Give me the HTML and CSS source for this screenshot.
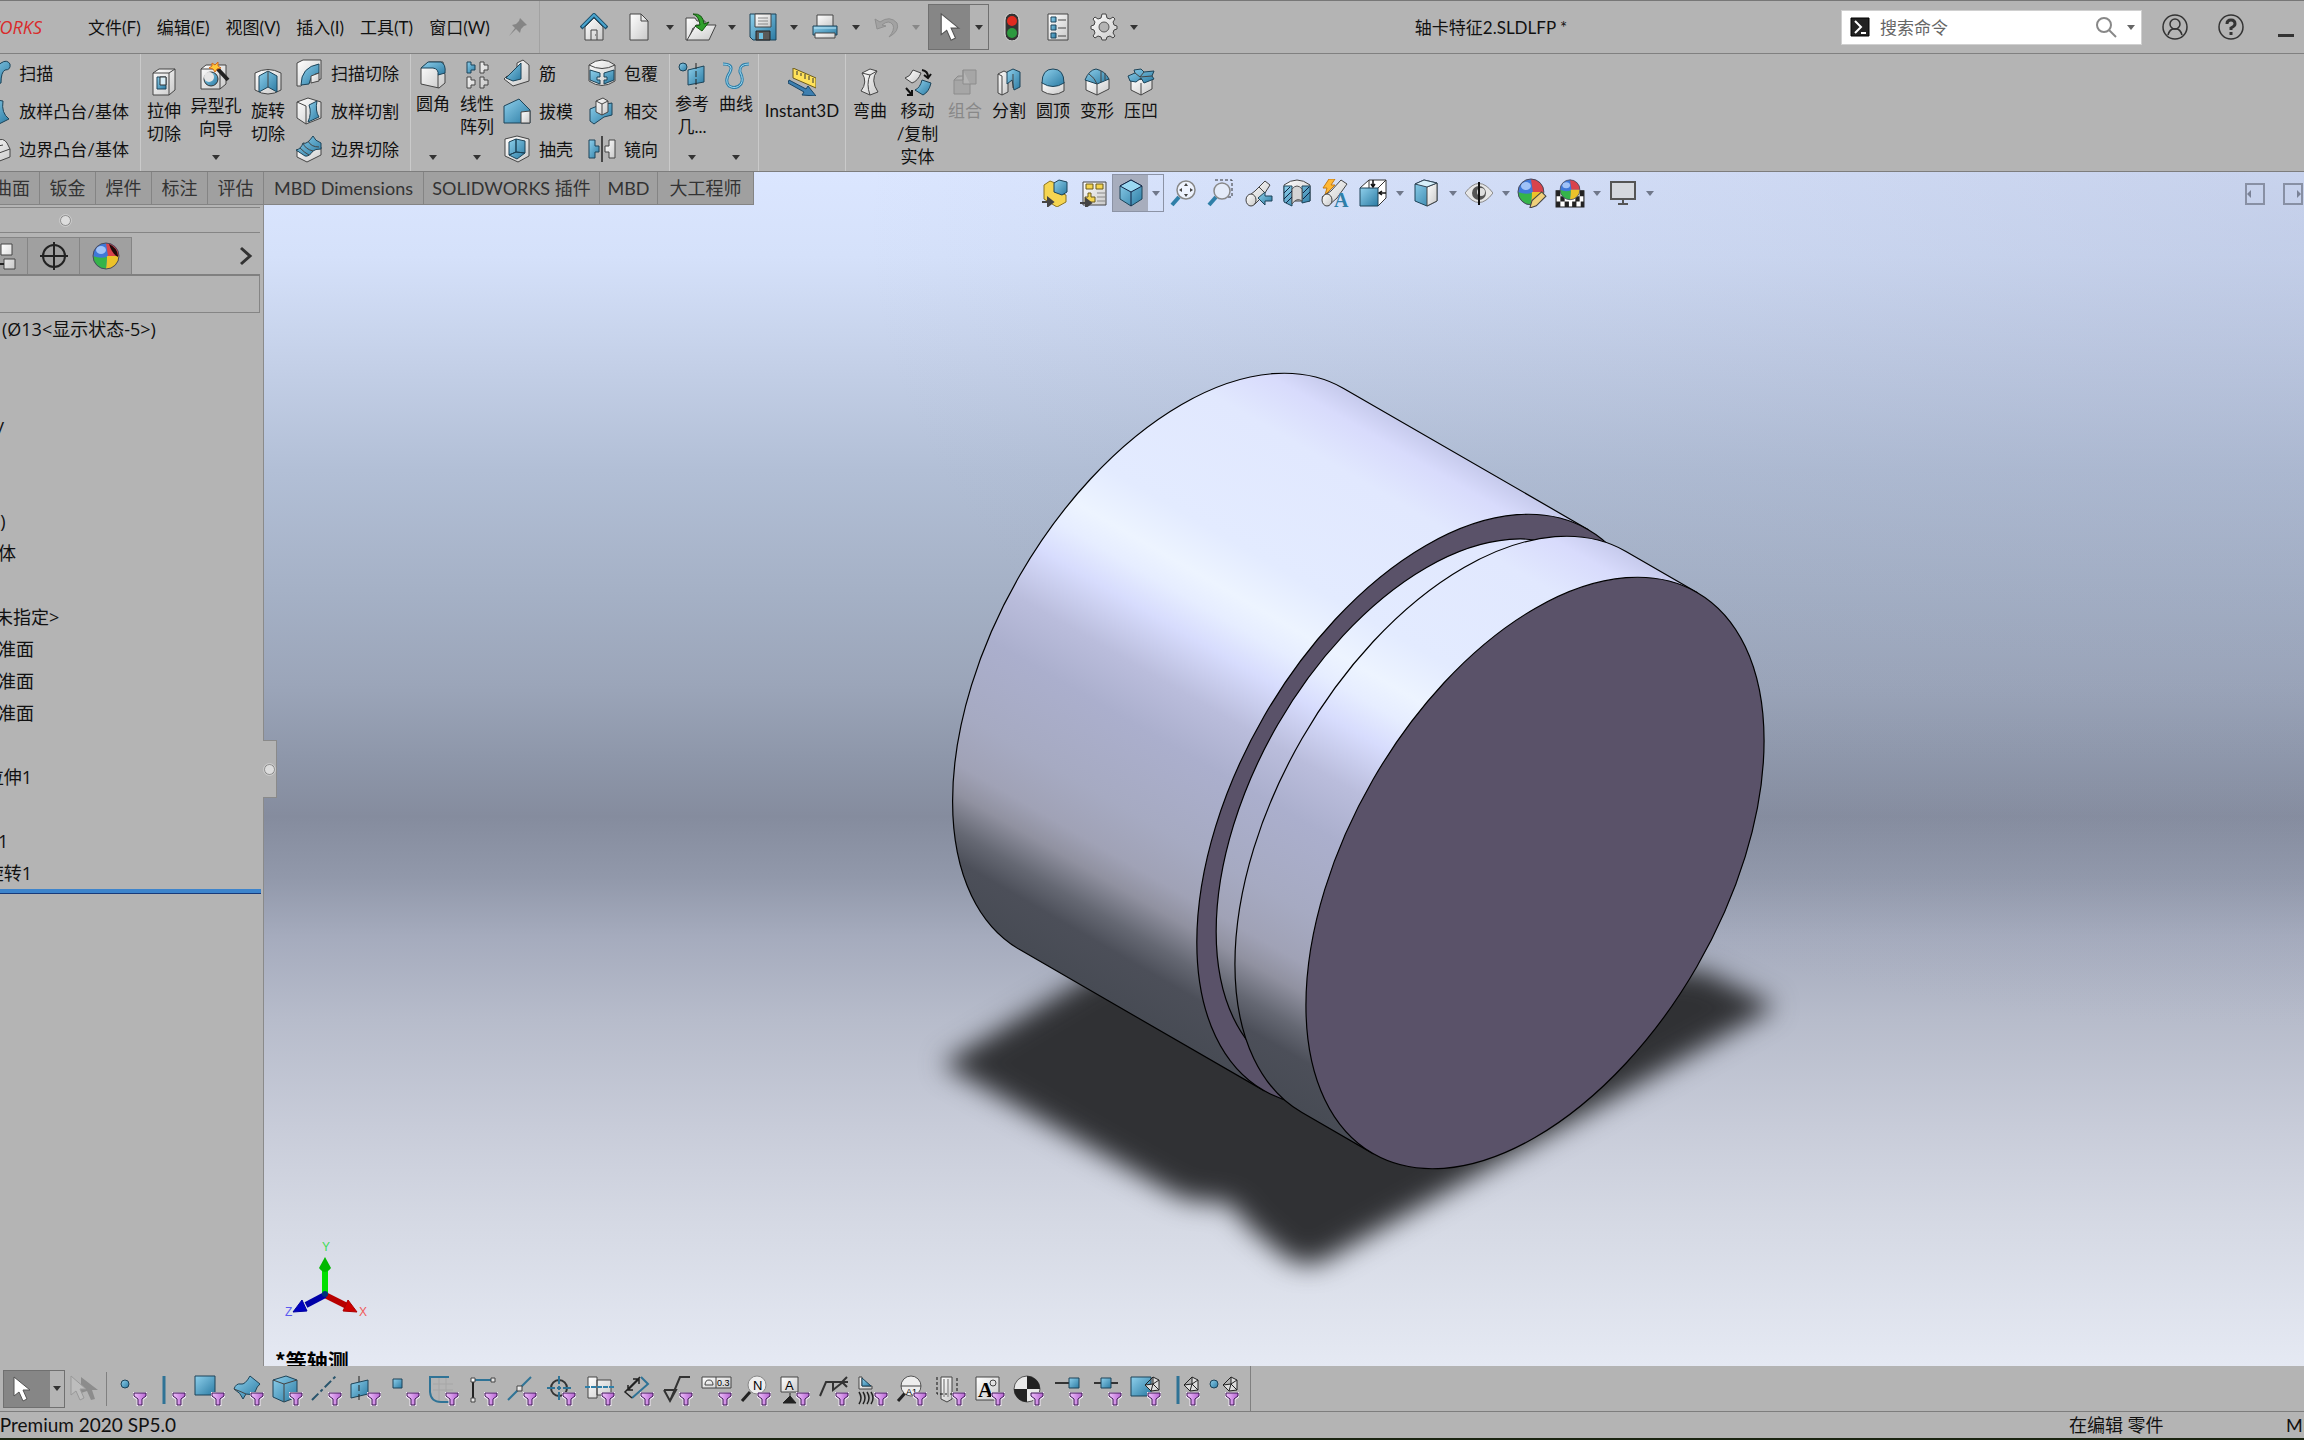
FILE: index.html
```html
<!DOCTYPE html>
<html lang="zh-CN">
<head>
    <meta charset="UTF-8">
    <meta name="viewport" content="width=device-width, initial-scale=1.0">
    <title>轴卡特征2.SLDLFP *</title>
    <link rel="stylesheet" href="styles.css">
</head>
<body>
    <!-- shared gradients and small reusable shapes -->
    <svg class="defs" aria-hidden="true">
        <defs>
            <linearGradient id="gBlue" x1="0" y1="0" x2="1" y2="1">
                <stop offset="0" stop-color="#8fd0ec"/><stop offset="1" stop-color="#2b7ba3"/>
            </linearGradient>
            <linearGradient id="gGrey" x1="0" y1="0" x2="1" y2="1">
                <stop offset="0" stop-color="#ffffff"/><stop offset="1" stop-color="#c9c9c9"/>
            </linearGradient>
            <linearGradient id="gPink" x1="0" y1="0" x2="1" y2="0">
                <stop offset="0" stop-color="#efc0fb"/><stop offset="1" stop-color="#b765d3"/>
            </linearGradient>
            <symbol id="funnel" viewBox="0 0 14 14">
                <path d="M1 1H13V4L9 7V13H5V7L1 4Z" fill="url(#gPink)" stroke="#f2e8f6" stroke-width="3"/>
                <path d="M1 1H13V4L9 7V13H5V7L1 4Z" fill="url(#gPink)" stroke="#3b1650"/>
            </symbol>
            <symbol id="arrow" viewBox="0 0 20 26">
                <path d="M2 1V20L7 16L11 25L15 23L11 14L18 14Z" fill="#fff" stroke="#555" stroke-width="1"/>
            </symbol>
            <symbol id="ball" viewBox="0 0 28 28">
                <circle cx="14" cy="14" r="13" fill="#3f78d8"/>
                <path d="M14 1A13 13 0 0 1 27 14H16Z" fill="#d9434b"/>
                <path d="M27 14A13 13 0 0 1 14 27L15 14Z" fill="#ecc22a"/>
                <path d="M14 27A13 13 0 0 1 1 14Q8 17 15 15Z" fill="#35b44a"/>
                <ellipse cx="9" cy="8" rx="5" ry="4" fill="#b9d4ff" opacity=".8"/>
                <circle cx="14" cy="14" r="13" fill="none" stroke="#4a4a5a"/>
            </symbol>
            <symbol id="mesh" viewBox="0 0 16 16">
                <path d="M1 9L9 1L15 4V14L7 15Z M1 9L9 8L9 1M9 8L15 4M9 8L15 14M9 8L7 15" fill="#ddd" stroke="#222"/>
            </symbol>
        </defs>
    </svg>

    <header class="titlebar">
        <div class="title-left">
            <div class="brand">SOLID<span>WORKS</span></div>
            <nav class="menu">
                <button type="button">文件(F)</button>
                <button type="button">编辑(E)</button>
                <button type="button">视图(V)</button>
                <button type="button">插入(I)</button>
                <button type="button">工具(T)</button>
                <button type="button">窗口(W)</button>
            </nav>
            <button type="button" class="pin" aria-label="固定">
                <svg width="20" height="20" viewBox="0 0 20 20"><path d="M12 1L19 8L16 9L13 12L12 16L8 12L1 19L7 11L4 8L8 7L11 4Z" fill="#858585"/></svg>
            </button>
        </div>
        <div class="quick">
            <button type="button" class="q-wide" aria-label="主页"><svg class="ico" viewBox="0 0 28 28"><path class="w" d="M5 14L14 5L23 14V27H5Z"/><path d="M1 15L14 2L27 15" fill="none" stroke="#1d4f6b" stroke-width="4"/><path d="M2 14L14 2L26 14" fill="none" stroke="#4aa5cf" stroke-width="2"/><path class="k" d="M11 27V17H17V27M15 22H16"/></svg></button>
            <button type="button" class="q-btn q-new" aria-label="新建"><svg class="ico" viewBox="0 0 28 28"><path class="w" d="M5 1H16L23 8V27H5Z"/><path class="k" d="M16 1V8H23"/></svg></button>
            <button type="button" class="drop" aria-label="新建选项"></button>
            <button type="button" class="q-btn" aria-label="打开"><svg class="ico-l" viewBox="0 0 32 28"><path class="w" d="M1 5H10L12 8H20V15H8L3 27H1Z"/><path class="w" d="M2 27L11 12H31L24 27Z"/><path d="M8 1Q18 0 19 11L24 9L17 18L10 13L15 12Q14 3 8 1Z" fill="#2fa02c" stroke="#13560f"/></svg></button>
            <button type="button" class="drop" aria-label="打开选项"></button>
            <button type="button" class="q-btn" aria-label="保存"><svg class="ico" viewBox="0 0 28 28"><path class="b" d="M1 1H27V27H4L1 24Z"/><path class="w" d="M6 1H22V14H6Z"/><path d="M9 5H19M9 8H19M9 11H19" stroke="#888"/><path d="M7 18H21V27H7Z" fill="#5a5a5a" stroke="#222"/><path d="M10 20H14V26H10Z" fill="#6fc0e0"/></svg></button>
            <button type="button" class="drop" aria-label="保存选项"></button>
            <button type="button" class="q-btn" aria-label="打印"><svg class="ico" viewBox="0 0 28 28"><path class="w" d="M6 2H22V14H6Z"/><path class="b" d="M2 13H26V22H2Z"/><path d="M3 15H25" stroke="#bfe6f6"/><path class="w" d="M4 20H24V25H4Z"/></svg></button>
            <button type="button" class="drop" aria-label="打印选项"></button>
            <button type="button" class="q-btn" aria-label="撤销" disabled><svg class="ico" viewBox="0 0 28 28"><path d="M2 6L4 16L13 13L9 12Q16 6 20 12Q22 17 16 24Q27 18 24 10Q17 2 7 9Z" fill="#a2a2a2" stroke="#8f8f8f"/></svg></button>
            <button type="button" class="drop dim q-last" aria-label="撤销选项" disabled></button>
            <span class="split">
                <button type="button" class="split-main" aria-label="选择"><svg width="22" height="30" viewBox="0 0 20 26"><use href="#arrow"/></svg></button>
                <button type="button" class="split-drop drop" aria-label="选择选项"></button>
            </span>
            <button type="button" class="q-wide" aria-label="重建模型"><svg class="ico" viewBox="0 0 28 28"><rect x="7" y="0" width="14" height="28" rx="7" fill="#333" stroke="#ddd"/><circle cx="14" cy="8" r="5" fill="#e02b20"/><circle cx="14" cy="20" r="5" fill="#2d9a3f"/></svg></button>
            <button type="button" class="q-wide" aria-label="文件属性"><svg class="ico" viewBox="0 0 28 28"><path class="w" d="M4 1H24V27H4Z"/><path class="b" d="M7 4H12V9H7ZM7 12H12V17H7ZM7 20H12V25H7Z"/><path class="k" d="M14 7H22M14 15H22M14 23H22"/></svg></button>
            <button type="button" class="q-wide" aria-label="选项"><svg class="ico" viewBox="0 0 28 28"><path class="w" d="M12 1H16L17 5L20 6L23 4L25 6L23 9L24 12L27 13V16L24 17L23 20L25 23L23 25L20 23L17 24L16 27H12L11 24L8 23L5 25L3 23L5 20L4 17L1 16V13L4 12L5 9L3 6L5 4L8 6L11 5Z"/><circle cx="14" cy="14" r="5" fill="#b4b4b4" stroke="#555"/></svg></button>
            <button type="button" class="drop q-tail" aria-label="选项菜单"></button>
        </div>
        <h1 class="doc-title">轴卡特征2.SLDLFP *</h1>
        <form class="search">
            <svg width="20" height="20" viewBox="0 0 20 20"><path d="M1 1H19V19H1Z" fill="#222" stroke="#000"/><path d="M5 4L11 10L5 16M11 16H16" fill="none" stroke="#fff" stroke-width="2"/></svg>
            <input type="text" id="cmd" placeholder="搜索命令" aria-label="搜索命令">
            <button type="submit" aria-label="搜索"><svg width="22" height="22" viewBox="0 0 22 22"><circle cx="9" cy="9" r="7" fill="none" stroke="#888" stroke-width="2"/><path d="M14 14L21 21" stroke="#888" stroke-width="2"/></svg></button>
            <button type="button" class="drop" aria-label="搜索范围"></button>
        </form>
        <div class="win-btns">
            <button type="button" aria-label="登录"><svg width="26" height="26" viewBox="0 0 26 26" fill="none" stroke="#333" stroke-width="1.5"><circle cx="13" cy="13" r="12"/><circle cx="13" cy="10" r="5"/><path d="M6 21Q8 14 13 15Q18 14 20 21"/></svg></button>
            <button type="button" aria-label="帮助"><svg width="26" height="26" viewBox="0 0 26 26" fill="none" stroke="#333"><circle cx="13" cy="13" r="12" stroke-width="1.5"/><path d="M9 10Q9 6 13 6Q17 6 17 10Q17 12 13 14V16M13 18V21" stroke-width="3"/></svg></button>
            <button type="button" class="min" aria-label="最小化"></button>
        </div>
    </header>

    <section class="ribbon" aria-label="特征">
        <div class="group g-first">
            <div class="stack">
                <button type="button" class="row"><svg class="ico" viewBox="0 0 28 28"><path class="b" d="M2 8Q10 12 18 4Q24 0 27 5Q28 11 22 11Q18 13 18 24L12 26Q12 16 8 15Z"/></svg>扫描</button>
                <button type="button" class="row"><svg class="ico" viewBox="0 0 28 28"><path class="b" d="M8 2L20 4Q18 16 26 22L16 27L4 24Z"/></svg>放样凸台/基体</button>
                <button type="button" class="row"><svg class="ico" viewBox="0 0 28 28"><path class="w" d="M2 14Q10 16 14 6Q20 2 24 8L27 14V22L14 27L2 22Z"/><path class="k" d="M6 14L16 18L27 14M16 18V26M10 12L20 10"/></svg>边界凸台/基体</button>
            </div>
        </div>
        <div class="group">
            <button type="button" class="tool t-46"><svg class="ico" viewBox="0 0 28 28"><path class="w" d="M3 5L9 1H25V22L19 27H3Z"/><path class="k" d="M3 5H19V27M19 5L25 1"/><path class="b" d="M7 9H16V21H7Z"/><path d="M10 9H16V17H10Z" fill="#d9eef7" stroke="#333"/></svg>拉伸<br>切除</button>
            <button type="button" class="tool t-58 has-drop"><svg class="ico-l" viewBox="0 0 32 28"><path class="w" d="M1 7L6 3H26V22L20 27H1Z"/><path class="k" d="M1 7H20V27"/><circle cx="11" cy="17" r="7" fill="url(#gBlue)" stroke="#333"/><circle cx="9" cy="15" r="5" fill="#e6e6e6"/><path d="M15 4L28 18" stroke="#222" stroke-width="4"/><path d="M12 1L15 3L18 0L18 4L21 6L17 7L15 10L13 7L9 6L12 4Z" fill="#ffc83a" stroke="#d2691e"/></svg>异型孔<br>向导<i class="caret"></i></button>
            <button type="button" class="tool t-46"><svg class="ico" viewBox="0 0 28 28"><path class="w" d="M1 5Q14 -2 27 5V22Q14 30 1 22Z"/><path class="b" d="M5 8L14 3L23 8V24L14 19L5 24Z"/><path class="k" d="M14 3V19"/></svg>旋转<br>切除</button>
            <div class="stack">
                <button type="button" class="row"><svg class="ico" viewBox="0 0 28 28"><path class="w" d="M2 4L8 1H26V20L20 22L14 14L6 27H2Z"/><path class="b" d="M6 26Q6 8 24 5V14Q16 15 14 25Z"/><path class="w" d="M16 17L24 14V22L16 24Z"/></svg>扫描切除</button>
                <button type="button" class="row"><svg class="ico" viewBox="0 0 28 28"><path class="w" d="M2 5L13 1L26 5V21L11 27L2 21Z"/><path class="k" d="M2 5L11 9V27"/><path class="b" d="M14 8L22 4Q20 14 24 20L13 25Q17 16 14 8Z"/></svg>放样切割</button>
                <button type="button" class="row"><svg class="ico" viewBox="0 0 28 28"><path class="w" d="M2 16V22L12 27L26 20V12Z"/><path class="b" d="M1 15Q6 14 8 8Q12 10 18 1Q20 6 26 8V14Q20 14 18 16Q14 22 10 21Z"/><path class="k" d="M8 8Q10 14 18 16M5 13Q10 18 14 20M13 6Q16 12 24 12"/></svg>边界切除</button>
            </div>
        </div>
        <div class="group">
            <button type="button" class="tool t-44 has-drop"><svg class="ico" viewBox="0 0 28 28"><path class="w" d="M2 7L10 1H24L26 14V22L20 27L2 23Z"/><path class="b" d="M2 7L9 1H22Q27 3 26 12L19 14Q20 8 14 7Z"/><path class="k" d="M19 14V27"/></svg>圆角<i class="caret"></i></button>
            <button type="button" class="tool t-44 has-drop"><svg class="ico" viewBox="0 0 28 28"><path class="b" d="M4 1H8V4H12V9H8V12H4Z"/><path class="w" d="M17 1H21V4H25V9H21V12H17ZM4 16H8V19H12V24H8V27H4ZM17 16H21V19H25V24H21V27H17Z"/></svg>线性<br>阵列<i class="caret"></i></button>
            <div class="stack">
                <button type="button" class="row"><svg class="ico" viewBox="0 0 28 28"><path class="w" d="M14 4L20 1L26 6V22L10 27L1 20L4 17L14 20Z"/><path class="b" d="M3 19L18 4V20L10 22Z"/></svg>筋</button>
                <button type="button" class="row"><svg class="ico" viewBox="0 0 28 28"><path class="b" d="M1 9L16 2L27 13V26H1Z"/><path class="w" d="M18 15L27 14V26H18Z"/></svg>拔模</button>
                <button type="button" class="row"><svg class="ico" viewBox="0 0 28 28"><path class="w" d="M2 4L14 1L26 4V21L15 27L2 21Z"/><path class="b" d="M6 7L13 4V17L6 20ZM13 4L22 6V18L13 17ZM6 20L13 17L22 18L14 24Z"/></svg>抽壳</button>
            </div>
            <div class="stack">
                <button type="button" class="row"><svg class="ico" viewBox="0 0 28 28"><path class="w" d="M1 6Q14 -4 27 6V22Q14 31 1 22Z"/><path class="k" d="M1 6Q14 13 27 6"/><path class="b" d="M2 11L12 14V18H9V21H12V25L2 21ZM26 11L16 14V18H19V21H16V25L26 21Z"/></svg>包覆</button>
                <button type="button" class="row"><svg class="ico" viewBox="0 0 28 28"><path class="b" d="M2 12L12 8L24 6V18L16 20L6 27L2 24Z"/><path class="w" d="M8 4L15 1L20 4V15L14 18L8 15Z"/><path class="k" d="M8 4L14 7L20 4M14 7V18"/></svg>相交</button>
                <button type="button" class="row"><svg class="ico" viewBox="0 0 28 28"><path class="b" d="M1 5H7V11H11V17H7V23H1Z"/><path class="w" d="M27 5H21V11H17V17H21V23H27Z"/><path d="M14 1V27" stroke="#222" stroke-width="1.5"/></svg>镜向</button>
            </div>
        </div>
        <div class="group">
            <button type="button" class="tool t-44 has-drop"><svg class="ico" viewBox="0 0 28 28"><circle class="b" cx="5" cy="6" r="4"/><path class="b" d="M10 9L26 5V21L10 24Z"/><path d="M18 2V28" stroke="#222" stroke-dasharray="6 2"/></svg>参考<br>几...<i class="caret"></i></button>
            <button type="button" class="tool t-44 has-drop"><svg class="ico" viewBox="0 0 28 28"><path d="M1 3Q12 3 8 11Q2 20 7 25Q14 29 19 23Q22 18 18 11Q17 3 27 3" fill="none" stroke="#2f7fa8" stroke-width="3"/><path d="M1 3Q12 3 8 11Q2 20 7 25Q14 29 19 23Q22 18 18 11Q17 3 27 3" fill="none" stroke="#9ed8f0"/></svg>曲线<i class="caret"></i></button>
        </div>
        <div class="group">
            <button type="button" class="tool t-86"><svg class="ico" viewBox="0 0 28 28"><path d="M5 0L28 10V20L5 10Z" fill="#ffe25a" stroke="#6b5a1c"/><path d="M9 3V7M13 5V8M17 6V11M21 8V12M25 10V15" stroke="#333"/><path d="M1 12L18 21L20 18L28 28L14 27L16 24L0 15Z" fill="#3d7fb0" stroke="#1b4666"/></svg>Instant3D</button>
        </div>
        <div class="group g-last">
            <button type="button" class="tool t-44"><svg class="ico" viewBox="0 0 28 28"><path class="w" d="M6 5L14 1L21 3Q14 12 22 24L14 27L5 23Q12 14 6 5Z"/><path class="k" d="M6 5L14 7L21 3M14 7Q10 16 14 27"/></svg>弯曲</button>
            <button type="button" class="tool t-51"><svg class="ico" viewBox="0 0 28 28"><path class="w" d="M1 10Q6 9 9 2L17 5Q14 13 8 15Z"/><path class="b" d="M11 22Q16 20 18 12L27 15Q25 24 19 27Z"/><path d="M18 2Q24 3 24 9M20 7L24 10L27 6M2 20L8 27M8 22V27H3" fill="none" stroke="#111" stroke-width="2"/></svg>移动<br>/复制<br>实体</button>
            <button type="button" class="tool t-44" disabled><svg class="ico" viewBox="0 0 28 28"><path class="dimmed" d="M12 2H25V16H19V26H3V12H12ZM3 12L7 8H12M12 2V16H19"/></svg>组合</button>
            <button type="button" class="tool t-44"><svg class="ico" viewBox="0 0 28 28"><path class="w" d="M3 6L9 3L13 5V24L7 27L3 25Z"/><path class="b" d="M12 4L18 1L25 4V19L19 22L17 12L12 16Z"/><path class="k" d="M3 6L7 8V27M18 6V20"/></svg>分割</button>
            <button type="button" class="tool t-44"><svg class="ico" viewBox="0 0 28 28"><path class="w" d="M3 14H25V23Q14 30 3 23Z"/><path class="b" d="M3 15Q3 1 14 1Q25 1 25 15Q14 22 3 15Z"/></svg>圆顶</button>
            <button type="button" class="tool t-44"><svg class="ico" viewBox="0 0 28 28"><path class="w" d="M3 12V22L14 27L26 21V11Z"/><path class="b" d="M2 12Q6 2 13 1Q22 3 26 11L14 16Z"/><path class="k" d="M14 16V27M14 16Q12 10 6 6M18 3V14M22 5V12"/></svg>变形</button>
            <button type="button" class="tool t-44"><svg class="ico" viewBox="0 0 28 28"><path class="w" d="M4 12V22L14 27L25 21V11Z"/><path class="b" d="M1 8L8 5L7 2L14 1L17 4L27 3L25 8L27 11L17 15L14 10L9 14L3 13Z"/><path class="k" d="M14 15V27M8 5L13 9L17 4M13 9L25 8"/></svg>压凹</button>
        </div>
    </section>

    <main class="work">
        <div class="viewport">
            <svg class="scene" viewBox="264 172 2040 1194" preserveAspectRatio="xMinYMin slice" role="img" aria-label="零件等轴测视图">
                <defs>
                    <linearGradient id="shade" gradientUnits="userSpaceOnUse" x1="0" y1="-324" x2="0" y2="324">
                        <stop offset="0" stop-color="#c6caec"/>
                        <stop offset=".04" stop-color="#d8dbfc"/>
                        <stop offset=".11" stop-color="#e1e8fe"/>
                        <stop offset=".29" stop-color="#e3ebff"/>
                        <stop offset=".36" stop-color="#edf4ff"/>
                        <stop offset=".4" stop-color="#e6edff"/>
                        <stop offset=".45" stop-color="#d7dcfd"/>
                        <stop offset=".53" stop-color="#babddc"/>
                        <stop offset=".61" stop-color="#abafcd"/>
                        <stop offset=".73" stop-color="#a6aac2"/>
                        <stop offset=".8" stop-color="#a0a2b6"/>
                        <stop offset=".84" stop-color="#9091a0"/>
                        <stop offset=".89" stop-color="#656873"/>
                        <stop offset=".93" stop-color="#4c4f59"/>
                        <stop offset="1" stop-color="#474b54"/>
                    </linearGradient>
                    <filter id="soft" x="-10%" y="-20%" width="120%" height="140%" color-interpolation-filters="sRGB"><feGaussianBlur stdDeviation="13"/></filter>
                </defs>
                <path d="M942 1064L1100 970H1702L1776 1006L1325 1260Q1305 1270 1284 1256L1246 1224Q1236 1203 1213 1201Q1195 1204 1172 1193Z" fill="#303134" filter="url(#soft)"/>
                <!-- local x runs along the cylinder axis, origin is the centre of the front face -->
                <g transform="translate(1535 873) rotate(30)" stroke="#000" stroke-width="1.2">
                    <path d="M-408 -324A187 324 0 0 0 -408 324H-126V-324Z" fill="url(#shade)"/>
                    <ellipse cx="-126" cy="0" rx="187" ry="324" fill="#5a5269"/>
                    <path d="M-126 -297A171 297 0 0 0 -126 297H-82V-297Z" fill="url(#shade)"/>
                    <path d="M-82 -324A187 324 0 0 0 -82 324H0V-324Z" fill="url(#shade)"/>
                    <ellipse cx="0" cy="0" rx="187" ry="324" fill="#5a5269"/>
                </g>
                <g>
                    <path d="M325 1295L347 1306" stroke="#b80000" stroke-width="6"/>
                    <path d="M348 1300L357 1312L343 1311Z" fill="#c00" stroke="#a00"/>
                    <path d="M325 1295L306 1305" stroke="#0000a8" stroke-width="6"/>
                    <path d="M302 1300L293 1312L307 1311Z" fill="#0000c0" stroke="#0000a0"/>
                    <path d="M325 1295V1270" stroke="#00e000" stroke-width="6"/>
                    <path d="M325 1257L331 1268Q325 1276 319 1268Z" fill="#00b800"/>
                    <circle cx="325" cy="1294" r="3" fill="#00307a"/>
                    <text class="axis" x="322" y="1251" fill="#3fdc55">Y</text>
                    <text class="axis" x="359" y="1316" fill="#f05a5a">X</text>
                    <text class="axis" x="285" y="1316" fill="#5a5af0">Z</text>
                </g>
                <text class="view-name" x="275" y="1369">*等轴测</text>
            </svg>
        </div>

        <div class="strip">
            <nav class="tabs">
                <button type="button" class="tab-cut">曲面</button>
                <button type="button" class="tab-56">钣金</button>
                <button type="button" class="tab-56">焊件</button>
                <button type="button" class="tab-56">标注</button>
                <button type="button" class="tab-56">评估</button>
                <button type="button" class="tab-160">MBD Dimensions</button>
                <button type="button" class="tab-176">SOLIDWORKS 插件</button>
                <button type="button" class="tab-58">MBD</button>
                <button type="button" class="tab-96">大工程师</button>
            </nav>
            <div class="heads-up">
                <button type="button" aria-label="零件"><svg class="ico" viewBox="0 0 28 28"><path d="M3 6L9 2L14 4V12L25 16V23L16 28L3 20Z" fill="#f5d551" stroke="#8a7220"/><path class="b" d="M13 4L18 1L26 3V13L21 16L13 13Z"/><path d="M1 23H10M7 19L12 23L7 27Z" fill="#444" stroke="#444" stroke-width="2"/></svg></button>
                <button type="button" aria-label="布局"><svg class="ico" viewBox="0 0 28 28"><path class="w" d="M4 3H27V26H4Z"/><path d="M7 5H14V10H7ZM17 5H24V10H17ZM9 14H12V18H16V23H6V18H9Z" fill="#f5d551" stroke="#6b5a1c"/><path d="M18 14H27M18 18H27M18 22H27" stroke="#888"/><path d="M1 24H8M7 20L12 24L7 28Z" fill="#444" stroke="#444" stroke-width="2"/></svg></button>
                <span class="split hud-split">
                    <button type="button" class="split-main" aria-label="视图定向"><svg class="ico" viewBox="0 0 28 28"><path class="b" d="M3 7L14 1L25 7V20L14 27L3 20Z"/><path d="M3 7L14 1L25 7L14 13Z" fill="#9bd8f2" stroke="#124"/><path d="M14 13V27" stroke="#124"/></svg></button>
                    <button type="button" class="split-drop drop" aria-label="视图定向选项"></button>
                </span>
                <button type="button" aria-label="整屏显示全图"><svg class="ico" viewBox="0 0 28 28"><path d="M10 18L3 26" stroke="#2f7fa8" stroke-width="4"/><circle cx="17" cy="11" r="9" fill="#eef3ff" stroke="#888" stroke-width="1.5"/><path d="M17 4L19 7H15ZM17 18L19 15H15ZM10 11L13 9V13ZM24 11L21 9V13Z" fill="#444"/></svg></button>
                <button type="button" aria-label="局部放大"><svg class="ico" viewBox="0 0 28 28"><path d="M8 1H25V18H20" fill="none" stroke="#333" stroke-dasharray="3 2"/><path d="M9 18L2 26" stroke="#2f7fa8" stroke-width="4"/><circle cx="15" cy="12" r="8" fill="#e4ebf8" stroke="#888" stroke-width="1.5"/></svg></button>
                <button type="button" aria-label="上一视图"><svg class="ico" viewBox="0 0 28 28"><path class="w" d="M1 19L10 12L20 2L25 6L18 17L9 26Z"/><ellipse class="w" cx="6" cy="21" rx="5" ry="6"/><path class="k" d="M14 8L20 14"/><path class="b" d="M13 19L20 13V17H27V22H20V26Z"/></svg></button>
                <button type="button" aria-label="剖面视图"><svg class="ico" viewBox="0 0 28 28"><path class="w" d="M1 6Q14 -4 27 6V22H1Z"/><path class="b" d="M1 7H9V27L1 23ZM19 7H27V22L19 24Z"/><path d="M9 10Q14 4 19 10V22Q14 18 9 25Z" fill="#d5d5d5" stroke="#555"/><path d="M1 14L7 8M1 20L9 12M3 24L9 18M20 14L26 8M20 20L27 13" stroke="#124"/></svg></button>
                <button type="button" aria-label="动态注解视图"><svg class="ico" viewBox="0 0 28 28"><path d="M8 0H14L10 6H14L4 16L6 9H2Z" fill="#ffb834" stroke="#c47a12"/><path class="w" d="M1 18L10 12L20 1L26 5L16 19L7 27Z"/><ellipse class="w" cx="6" cy="21" rx="5" ry="6"/><text class="hud-a" x="13" y="28">A</text></svg></button>
                <button type="button" aria-label="视图定向方位"><svg class="ico" viewBox="0 0 28 28"><path d="M1 9L10 1H27V19L19 27M27 1L19 9M10 1V9" fill="#fff" stroke="#333"/><path class="b" d="M1 9H19V27H1Z"/><path d="M14 1V7M12 5L14 8L16 5M27 14H21M23 12L20 14L23 16" fill="none" stroke="#111" stroke-width="1.5"/></svg></button>
                <button type="button" class="drop" aria-label="方位选项"></button>
                <button type="button" aria-label="显示样式"><svg class="ico" viewBox="0 0 28 28"><path class="b" d="M3 5L12 1L25 4V22L15 27L3 22Z"/><path class="w" d="M15 8L25 4V22L15 27Z"/><path d="M3 5L12 1L25 4L15 8Z" fill="#d7f0fa" stroke="#345"/></svg></button>
                <button type="button" class="drop" aria-label="样式选项"></button>
                <button type="button" aria-label="隐藏/显示项目"><svg class="ico" viewBox="0 0 28 28"><path d="M0 14Q14 -5 28 14Q14 33 0 14Z" fill="#e6e6e6" stroke="#888"/><circle cx="14" cy="14" r="7" fill="#555"/><circle cx="16" cy="13" r="4" fill="#ddd"/><path d="M14 3V26" stroke="#111" stroke-width="2"/></svg></button>
                <button type="button" class="drop" aria-label="项目选项"></button>
                <button type="button" aria-label="编辑外观"><svg class="ico-l" viewBox="0 0 28 28"><use href="#ball" width="26" height="26"/><path d="M12 28L14 21L23 13L27 17L18 26Z" fill="#efd07a" stroke="#444"/></svg></button>
                <button type="button" aria-label="应用布景"><svg class="ico-l" viewBox="0 0 28 28"><path d="M1 12H27V27H1Z" fill="#fff" stroke="#222"/><path d="M1 12H5V17H1ZM23 12H27V17H23ZM5 17H9V22H5ZM19 17H23V22H19ZM1 22H5V27H1ZM9 22H13V27H9ZM16 22H20V27H16ZM24 22H27V27H24Z" fill="#222"/><use href="#ball" x="4" y="0" width="20" height="22"/></svg></button>
                <button type="button" class="drop" aria-label="布景选项"></button>
                <button type="button" aria-label="视图设定"><svg class="ico" viewBox="0 0 28 28"><path d="M2 3H26V20H2Z" fill="#d5d8de" stroke="#555" stroke-width="2"/><path d="M14 20V25M9 25H19" stroke="#555" stroke-width="2"/></svg></button>
                <button type="button" class="drop" aria-label="视图设定选项"></button>
            </div>
            <div class="panes">
                <button type="button" aria-label="向左折叠"><svg width="20" height="22" viewBox="0 0 20 22"><path d="M1 1H19V21H1Z" fill="none" stroke="#8890a4" stroke-width="2"/><path d="M6 7V15L2 11Z" fill="#7a8296"/></svg></button>
                <button type="button" aria-label="向右折叠"><svg width="20" height="22" viewBox="0 0 20 22"><path d="M1 1H19V21H1Z" fill="none" stroke="#8890a4" stroke-width="2"/><path d="M14 7V15L18 11Z" fill="#7a8296"/></svg></button>
            </div>
        </div>

        <aside class="side">
            <div class="grip"><span class="dot"></span></div>
            <div class="side-tabs">
                <button type="button" class="st-cut" aria-label="配置"><svg width="16" height="28" viewBox="0 0 16 28"><path class="w" d="M1 2H12V13H1ZM4 17H15V27H4Z"/><path d="M0 22H4" stroke="#222" stroke-width="2"/></svg></button>
                <button type="button" aria-label="尺寸专家"><svg class="ico" viewBox="0 0 28 28"><circle cx="14" cy="14" r="11" fill="none" stroke="#222" stroke-width="2"/><path d="M14 0V28M0 14H28" stroke="#222" stroke-width="2"/></svg></button>
                <button type="button" aria-label="外观"><svg class="ico" viewBox="0 0 28 28"><use href="#ball"/><path d="M17 2Q26 6 26 15Q20 12 17 2Z" fill="#210a0a"/></svg></button>
                <button type="button" class="more" aria-label="更多"><svg width="14" height="20" viewBox="0 0 14 20"><path d="M2 2L11 10L2 18" fill="none" stroke="#333" stroke-width="3"/></svg></button>
            </div>
            <div class="filter-box"></div>
            <ul class="tree">
                <li class="root">(Ø13&lt;显示状态-5&gt;)</li>
                <li></li>
                <li></li>
                <li>History</li>
                <li></li>
                <li></li>
                <li>实体 (1)</li>
                <li>曲面实体</li>
                <li></li>
                <li>材质 &lt;未指定&gt;</li>
                <li>前视基准面</li>
                <li>上视基准面</li>
                <li>右视基准面</li>
                <li></li>
                <li>凸台-拉伸1</li>
                <li></li>
                <li>基准轴1</li>
                <li>切除-旋转1</li>
            </ul>
            <div class="rollback"></div>
            <button type="button" class="handle" aria-label="折叠面板"><span class="dot"></span></button>
        </aside>
    </main>

    <div class="filters">
        <span class="split f-split">
            <button type="button" class="split-main" aria-label="选择"><svg width="20" height="28" viewBox="0 0 20 26"><use href="#arrow"/></svg></button>
            <button type="button" class="split-drop drop" aria-label="选择选项"></button>
        </span>
        <button type="button" class="ghost" aria-label="清除过滤器" disabled><svg width="30" height="28" viewBox="0 0 30 28"><path d="M12 2V18L18 16L22 25L26 24L23 15L29 15Z" fill="#8c8c8c"/><path d="M2 1V20L7 16L11 25L15 23L11 14L17 14Z" fill="#bdbdbd" stroke="#999"/></svg></button>
        <div class="filter-list">
            <button type="button" aria-label="过滤顶点"><svg viewBox="0 0 36 34"><circle class="b" cx="12" cy="12" r="4"/><use href="#funnel" x="20" y="20" width="14" height="14"/></svg></button>
            <button type="button" aria-label="过滤边线"><svg viewBox="0 0 36 34"><path class="bl" d="M12 4V32"/><use href="#funnel" x="20" y="20" width="14" height="14"/></svg></button>
            <button type="button" aria-label="过滤面"><svg viewBox="0 0 36 34"><path class="b" d="M4 4H24V23H4Z"/><use href="#funnel" x="20" y="20" width="14" height="14"/></svg></button>
            <button type="button" aria-label="过滤曲面实体"><svg viewBox="0 0 36 34"><path class="b" d="M4 17Q6 11 11 12Q15 13 20 4L30 12Q27 14 25 20Q21 24 16 22L13 27Q11 21 4 17Z"/><path class="k" d="M4 17Q12 20 16 22"/><use href="#funnel" x="20" y="20" width="14" height="14"/></svg></button>
            <button type="button" aria-label="过滤实体"><svg viewBox="0 0 36 34"><path class="b" d="M4 8L17 4L28 8V25L15 30L4 25Z"/><path class="k" d="M4 8L15 12L28 8M15 12V30"/><use href="#funnel" x="20" y="20" width="14" height="14"/></svg></button>
            <button type="button" aria-label="过滤基准轴"><svg viewBox="0 0 36 34"><path d="M4 28L28 4" stroke="#28546c" stroke-width="2" stroke-dasharray="9 3 3 3"/><use href="#funnel" x="20" y="20" width="14" height="14"/></svg></button>
            <button type="button" aria-label="过滤基准面"><svg viewBox="0 0 36 34"><path class="b" d="M4 12L21 8V22L4 26Z"/><path d="M12 4V31" stroke="#222" stroke-dasharray="6 3"/><use href="#funnel" x="20" y="20" width="14" height="14"/></svg></button>
            <button type="button" aria-label="过滤草图点"><svg viewBox="0 0 36 34"><path class="b" d="M7 7H16V16H7Z"/><use href="#funnel" x="20" y="20" width="14" height="14"/></svg></button>
            <button type="button" aria-label="过滤草图"><svg viewBox="0 0 36 34"><path d="M8 12H28M8 18H28M14 6V28M21 6V28" stroke="#a6a6a6"/><path class="bl thin" d="M24 5H5V20Q6 30 16 30H28"/><use href="#funnel" x="20" y="20" width="14" height="14"/></svg></button>
            <button type="button" aria-label="过滤草图线段"><svg viewBox="0 0 36 34"><path class="bl thin" d="M9 8H28"/><path d="M9 8V28" stroke="#222" stroke-width="2"/><path class="w" d="M7 6H11V10H7ZM27 6H31V10H27ZM7 26H11V30H7Z"/><use href="#funnel" x="20" y="20" width="14" height="14"/></svg></button>
            <button type="button" aria-label="过滤中点"><svg viewBox="0 0 36 34"><path class="bl thin" d="M5 28L28 5"/><path class="w" d="M14 14H19V19H14Z"/><use href="#funnel" x="20" y="20" width="14" height="14"/></svg></button>
            <button type="button" aria-label="过滤中心符号线"><svg viewBox="0 0 36 34"><circle cx="17" cy="16" r="8" fill="none" stroke="#333" stroke-width="2"/><path class="bl thin" d="M17 4V12M17 20V28M5 16H13M21 16H29M15 16H19M17 14V18"/><use href="#funnel" x="20" y="20" width="14" height="14"/></svg></button>
            <button type="button" aria-label="过滤中心线"><svg viewBox="0 0 36 34"><path class="w" d="M7 5H16V26H7ZM16 8H30V23H16Z"/><path d="M4 15H33" stroke="#2f7fa8" stroke-width="2" stroke-dasharray="5 1"/><use href="#funnel" x="20" y="20" width="14" height="14"/></svg></button>
            <button type="button" aria-label="过滤尺寸"><svg viewBox="0 0 36 34"><path class="bl thin" d="M12 26L28 12L21 5"/><path d="M20 5L5 20L12 26M9 17L18 8M8 13V18H13M13 7H19V12" fill="none" stroke="#222" stroke-width="1.5"/><use href="#funnel" x="20" y="20" width="14" height="14"/></svg></button>
            <button type="button" aria-label="过滤表面粗糙度"><svg viewBox="0 0 36 34"><path d="M5 18H17L11 29L5 18M11 29L21 5H31" fill="none" stroke="#333" stroke-width="2"/><use href="#funnel" x="20" y="20" width="14" height="14"/></svg></button>
            <button type="button" aria-label="过滤形位公差"><svg viewBox="0 0 36 34"><path class="w" d="M4 5H33V16H4ZM18 5V16"/><path class="k" d="M7 13Q7 8 11 8Q15 8 15 13Z"/><text class="tiny" x="19" y="14">0.3</text><use href="#funnel" x="20" y="20" width="14" height="14"/></svg></button>
            <button type="button" aria-label="过滤零件序号"><svg viewBox="0 0 36 34"><path d="M5 29L13 20" stroke="#222" stroke-width="3"/><circle cx="20" cy="13" r="9" fill="#eee" stroke="#888"/><text class="letter" x="16" y="18">N</text><use href="#funnel" x="20" y="20" width="14" height="14"/></svg></button>
            <button type="button" aria-label="过滤基准特征"><svg viewBox="0 0 36 34"><path class="w" d="M5 5H22V20H5Z"/><text class="letter" x="9" y="18">A</text><path d="M14 21V26M7 31L14 24L20 31Z" fill="#222" stroke="#222"/><use href="#funnel" x="20" y="20" width="14" height="14"/></svg></button>
            <button type="button" aria-label="过滤焊接符号"><svg viewBox="0 0 36 34"><path d="M5 24L11 10H33M18 10V18L28 10M32 5L27 10L32 15" fill="none" stroke="#333" stroke-width="2"/><use href="#funnel" x="20" y="20" width="14" height="14"/></svg></button>
            <button type="button" aria-label="过滤焊缝"><svg viewBox="0 0 36 34"><path class="w" d="M5 5H8V14H18V17H5Z"/><path class="b" d="M8 6L17 14H8Z"/><path d="M5 20Q9 26 5 32M9 20Q13 26 9 32M13 20Q17 26 13 32M17 20Q21 26 17 32" fill="none" stroke="#222" stroke-width="1.5"/><use href="#funnel" x="20" y="20" width="14" height="14"/></svg></button>
            <button type="button" aria-label="过滤基准目标"><svg viewBox="0 0 36 34"><path d="M5 29L13 20" stroke="#222" stroke-width="3"/><circle cx="18" cy="14" r="10" fill="#eee" stroke="#555"/><path class="k" d="M8 14H28"/><text class="tiny" x="13" y="23">A1</text><use href="#funnel" x="20" y="20" width="14" height="14"/></svg></button>
            <button type="button" aria-label="过滤装饰螺纹线"><svg viewBox="0 0 36 34"><path class="w" d="M9 5H20V27L15 30L9 27Z"/><path d="M5 5V22H25V5" fill="none" stroke="#111" stroke-dasharray="3 2"/><path d="M12 7V25M16 7V25" stroke="#aaa" stroke-width="2"/><use href="#funnel" x="20" y="20" width="14" height="14"/></svg></button>
            <button type="button" aria-label="过滤块"><svg viewBox="0 0 36 34"><path class="w" d="M5 5H28V28H5Z"/><text class="serif-a" x="7" y="25">A</text><circle class="k" cx="22" cy="11" r="3"/><use href="#funnel" x="20" y="20" width="14" height="14"/></svg></button>
            <button type="button" aria-label="过滤质心"><svg viewBox="0 0 36 34"><circle cx="17" cy="17" r="13" fill="#e8e8e8" stroke="#555"/><path d="M17 4A13 13 0 0 1 30 17H17ZM17 30A13 13 0 0 1 4 17H17Z" fill="#222"/><use href="#funnel" x="20" y="20" width="14" height="14"/></svg></button>
            <button type="button" aria-label="过滤连接点"><svg viewBox="0 0 36 34"><path d="M6 11H21" stroke="#333" stroke-width="2"/><path class="b" d="M20 6H30V16H20Z"/><use href="#funnel" x="20" y="20" width="14" height="14"/></svg></button>
            <button type="button" aria-label="过滤线路点"><svg viewBox="0 0 36 34"><path d="M6 11H30" stroke="#333" stroke-width="2"/><path class="b" d="M13 6H23V16H13Z"/><use href="#funnel" x="20" y="20" width="14" height="14"/></svg></button>
            <button type="button" aria-label="过滤网格面"><svg viewBox="0 0 36 34"><path class="b" d="M4 5H24V24H4Z"/><use href="#mesh" x="17" y="4" width="16" height="16"/><use href="#funnel" x="20" y="20" width="14" height="14"/></svg></button>
            <button type="button" aria-label="过滤网格边线"><svg viewBox="0 0 36 34"><path class="bl" d="M12 4V32"/><use href="#mesh" x="17" y="4" width="16" height="16"/><use href="#funnel" x="20" y="20" width="14" height="14"/></svg></button>
            <button type="button" aria-label="过滤网格顶点"><svg viewBox="0 0 36 34"><circle class="b" cx="9" cy="12" r="4"/><use href="#mesh" x="17" y="4" width="16" height="16"/><use href="#funnel" x="20" y="20" width="14" height="14"/></svg></button>
        </div>
    </div>

    <footer class="status">
        <span class="version">SOLIDWORKS Premium 2020 SP5.0</span>
        <span class="mode">在编辑 零件</span>
        <span class="units">MMGS</span>
    </footer>
</body>
</html>
```
FILE: styles.css
```css
* {
    box-sizing: border-box;
}
body {
    margin: 0;
    height: 100vh;
    display: flex;
    flex-direction: column;
    overflow: hidden;
    background: #b4b4b4;
    color: #111;
    font-family: Lato, "Noto Sans CJK SC", sans-serif;
    font-size: 17px;
    line-height: 23px;
    border-bottom: 2px solid #1a2410;
}
button {
    font: inherit;
    color: inherit;
    background: none;
    border: 0;
    padding: 0;
    margin: 0;
    display: flex;
    align-items: center;
    justify-content: center;
    flex: none;
    white-space: nowrap;
}
svg {
    display: block;
    flex: none;
}
.defs {
    position: absolute;
    width: 0;
    height: 0;
}
.ico {
    width: 28px;
    height: 28px;
}
.ico-l {
    width: 32px;
    height: 30px;
}

/* icon paint */
.b {
    fill: url(#gBlue);
    stroke: #1c4358;
}
.w {
    fill: url(#gGrey);
    stroke: #444;
}
.k {
    fill: none;
    stroke: #444;
}
.bl {
    fill: none;
    stroke: #2f7396;
    stroke-width: 3;
}
.thin {
    stroke-width: 2;
}
.dimmed {
    fill: #a6a6a6;
    stroke: #8c8c8c;
}

/* small black triangle */
.drop::after, .caret {
    content: "";
    width: 0;
    height: 0;
    border: 4px solid transparent;
    border-top: 5px solid #333;
    border-bottom: 0;
}
.dim::after {
    border-top-color: #888;
}

/* title bar */
.titlebar {
    height: 54px;
    flex: none;
    display: flex;
    align-items: center;
    border-top: 1px solid #777;
    border-bottom: 1px solid #808080;
}
.title-left {
    flex: none;
    width: 540px;
    height: 100%;
    display: flex;
    align-items: center;
    border-right: 1px solid #a2a2a2;
}
.brand {
    width: 42px;
    display: flex;
    justify-content: flex-end;
    overflow: hidden;
    color: #d92b2b;
    font: italic 18px "Open Sans", sans-serif;
}
.menu {
    display: flex;
    gap: 16px;
    margin-left: 46px;
}
.pin {
    margin-left: 18px;
}
.quick {
    display: flex;
    align-items: center;
    height: 100%;
    margin-left: 31px;
}
.q-wide {
    width: 46px;
}
.q-btn {
    width: 32px;
}
.q-new {
    margin-left: 6px;
}
.quick > .drop {
    width: 30px;
    height: 30px;
}
.quick > .q-last {
    width: 25px;
}
.quick > .q-tail {
    width: 14px;
}
.split {
    display: flex;
    width: 61px;
    height: 46px;
    border: 1px solid #707070;
}
.split-main {
    flex: 1;
    background: #868686;
}
.split-drop {
    width: 18px;
}
.doc-title {
    flex: 1;
    margin: 0;
    text-align: center;
    font-size: 17px;
    font-weight: 400;
}
.search {
    width: 301px;
    height: 35px;
    flex: none;
    display: flex;
    align-items: center;
    padding-left: 8px;
    background: #fff;
    border: 1px solid #d0d0d0;
}
.search input {
    flex: 1;
    min-width: 0;
    border: 0;
    outline: 0;
    padding: 0;
    margin-left: 10px;
    font: inherit;
    background: none;
}
.search input::placeholder {
    color: #666;
    opacity: 1;
}
.search .drop {
    width: 20px;
    margin-left: 4px;
}
.search .drop::after {
    border-top-color: #666;
}
.win-btns {
    display: flex;
    flex: none;
    margin-left: 5px;
}
.win-btns button {
    width: 56px;
    height: 46px;
}
.win-btns .min {
    width: 45px;
}
.min::after {
    content: "";
    width: 16px;
    height: 3px;
    margin: 16px 0 0 8px;
    background: #333;
}

/* ribbon */
.ribbon {
    height: 118px;
    flex: none;
    display: flex;
    border-bottom: 1px solid #7d7d7d;
}
.group {
    display: flex;
    flex: none;
    border-right: 1px solid #cacaca;
}
.g-first {
    width: 141px;
    justify-content: flex-end;
    padding-right: 11px;
    overflow: hidden;
}
.g-last {
    border-right: 0;
    padding-left: 2px;
}
.tool {
    flex-direction: column;
    justify-content: flex-start;
    padding-top: 14px;
}
.tool .ico, .tool .ico-l {
    margin-bottom: 3px;
}
.tool.has-drop {
    padding-top: 7px;
}
.tool .caret {
    margin: auto 0 11px;
}
.tool:disabled {
    color: #888;
}
.t-44 {
    width: 44px;
}
.t-46 {
    width: 46px;
}
.t-51 {
    width: 51px;
}
.t-58 {
    width: 58px;
}
.t-86 {
    width: 86px;
}
.stack {
    display: flex;
    flex-direction: column;
    padding: 0 11px 0 4px;
}
.g-first .stack {
    padding-right: 0;
}
.row {
    height: 38px;
    gap: 8px;
    justify-content: flex-start;
}

/* working area: the tab strip lies over the top of the viewport */
.work {
    flex: 1;
    min-height: 0;
    display: grid;
    grid-template-columns: 264px 1fr;
    grid-template-rows: 33px 1fr;
}
.viewport {
    grid-column: 2;
    grid-row: 1 / 3;
    overflow: hidden;
    background:
        radial-gradient(ellipse at 100% 5%, rgba(140, 150, 180, 0.26), transparent 50%),
        linear-gradient(#dbe6ff 0%, #d5e1fa 7%, #c4d0e8 16%, #b2bfd6 25%, #a5b1c6 35%, #9ba5b9 43%, #8e97aa 49%, #858c9e 54%, #9198aa 59%, #a5abbd 64%, #b7bccb 71%, #c8ccd9 80%, #d5d9e4 88%, #e5e9f3 100%);
}
.scene {
    width: 100%;
    height: 100%;
}
.axis {
    font: 12px "Liberation Sans", sans-serif;
}
.view-name {
    font: 700 21px "Noto Sans CJK SC", sans-serif;
}
.strip {
    grid-column: 1 / 3;
    grid-row: 1;
    z-index: 1;
    display: flex;
    align-items: flex-start;
}
.tabs {
    display: flex;
    height: 33px;
    font-size: 18px;
    color: #333;
}
.tabs button {
    background: #a0a0a0;
    border-right: 1px solid #848484;
    border-bottom: 1px solid #848484;
}
.tabs .tab-cut {
    width: 40px;
    justify-content: flex-end;
    padding-right: 9px;
    overflow: hidden;
}
.tab-56 {
    width: 56px;
}
.tab-58 {
    width: 58px;
}
.tab-96 {
    width: 96px;
}
.tab-160 {
    width: 160px;
}
.tab-176 {
    width: 176px;
}
.heads-up {
    display: flex;
    align-items: center;
    margin: 2px 0 0 282px;
    height: 38px;
}
.heads-up > button {
    width: 38px;
}
.heads-up > .drop {
    width: 15px;
}
.heads-up .drop::after {
    border-top-color: #70788a;
}
.heads-up .hud-split {
    width: 52px;
    height: 38px;
    border-color: #8c93a5;
}
.hud-split .split-main {
    background: #a7adbd;
}
.hud-split .split-drop {
    width: 15px;
}
.hud-a {
    font: 700 20px "Liberation Serif", serif;
    fill: #2f7fa8;
}
.panes {
    display: flex;
    gap: 18px;
    margin: 11px 1px 0 auto;
}

/* feature manager */
.side {
    grid-column: 1;
    grid-row: 2;
    position: relative;
    padding-top: 2px;
    background: #b4b4b4;
    border-right: 1px solid #8a8a8a;
}
.grip {
    height: 26px;
    margin-right: 3px;
    padding-left: 60px;
    display: flex;
    align-items: center;
    border-top: 1px solid #858585;
    border-bottom: 1px solid #858585;
}
.dot {
    width: 11px;
    height: 11px;
    border-radius: 50%;
    background: #ddd;
    border: 1px solid #888;
    outline: 1px solid #ccc;
}
.side-tabs {
    display: flex;
    height: 43px;
    padding-top: 4px;
    margin-right: 3px;
    border-bottom: 2px solid #808080;
}
.side-tabs button {
    width: 52px;
    background: #a0a0a0;
    border-top: 1px solid #858585;
    border-right: 1px solid #858585;
}
.side-tabs .st-cut {
    width: 28px;
    justify-content: flex-start;
}
.side-tabs .more {
    width: 28px;
    margin-left: auto;
    background: none;
    border: 0;
}
.filter-box {
    height: 37px;
    margin-right: 3px;
    border: 1px solid #858585;
    border-width: 0 1px 1px 0;
}
.tree {
    list-style: none;
    margin: 0;
    padding: 0;
    font-family: "Open Sans", "Noto Sans CJK SC", sans-serif;
    font-size: 18px;
    line-height: 32px;
    overflow: hidden;
}
.tree li {
    height: 32px;
    margin-left: -56px;
    white-space: nowrap;
}
.tree .root {
    margin-left: 2px;
}
.rollback {
    height: 5px;
    margin-right: 2px;
    background: #3d84cc;
    border-bottom: 1px solid #173a7a;
}
.handle {
    position: absolute;
    left: 100%;
    top: 535px;
    width: 14px;
    height: 58px;
    background: #b4b4b4;
    border: 1px solid #8a8a8a;
    border-left: 0;
}

/* selection filters */
.filters {
    height: 46px;
    flex: none;
    display: flex;
    align-items: center;
    border-bottom: 1px solid #7d7d7d;
    padding-left: 3px;
}
.f-split {
    width: 62px;
    height: 38px;
}
.f-split .split-main {
    justify-content: flex-start;
    padding-left: 8px;
}
.f-split .split-drop {
    width: 14px;
}
.ghost {
    width: 42px;
    height: 34px;
    justify-content: flex-start;
    padding-left: 4px;
    border-right: 1px solid #808080;
}
.filter-list {
    display: flex;
    height: 100%;
    align-items: center;
    padding: 0 6px;
    border-right: 1px solid #808080;
}
.filter-list button {
    width: 39px;
    justify-content: flex-start;
}
.filter-list svg {
    width: 36px;
    height: 34px;
}
.tiny {
    font: 9px "Liberation Sans", sans-serif;
}
.letter {
    font: 13px "Liberation Sans", sans-serif;
}
.serif-a {
    font: 700 21px "Liberation Serif", serif;
}

/* status bar */
.status {
    height: 26px;
    flex: none;
    display: flex;
    align-items: center;
    font-size: 18px;
    line-height: 26px;
    white-space: nowrap;
}
.version {
    width: 176px;
    display: flex;
    justify-content: flex-end;
    overflow: hidden;
    font-size: 19px;
}
.mode {
    margin-left: auto;
    width: 217px;
}
.units {
    width: 18px;
    overflow: hidden;
}
```
